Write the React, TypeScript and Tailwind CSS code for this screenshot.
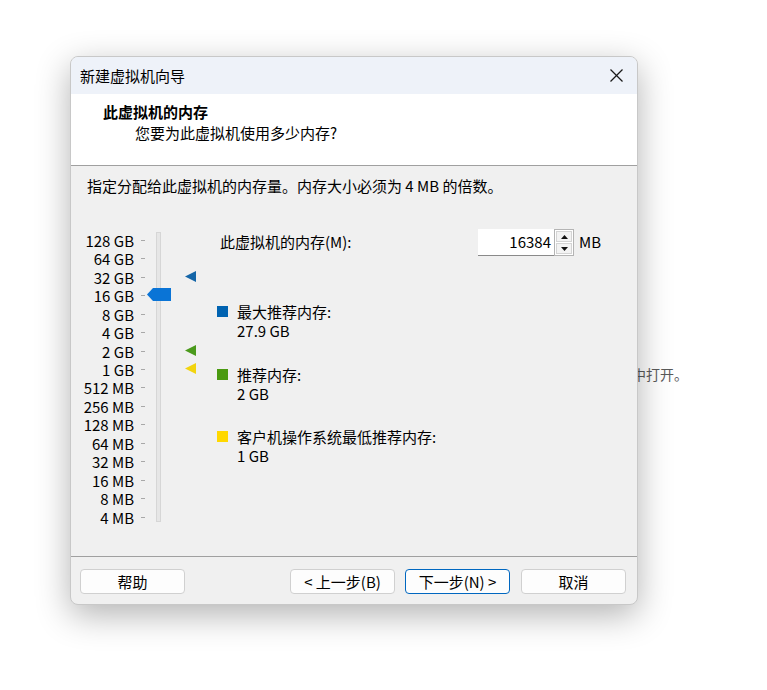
import React from "react";

const labels = [
  "128 GB", "64 GB", "32 GB", "16 GB", "8 GB", "4 GB", "2 GB", "1 GB",
  "512 MB", "256 MB", "128 MB", "64 MB", "32 MB", "16 MB", "8 MB", "4 MB",
];

function Marker({ color }: { color: string }) {
  return (
    <svg width="11" height="11" viewBox="0 0 11 11">
      <polygon points="0,5.5 11,0 11,11" fill={color} />
    </svg>
  );
}

function Legend({ color, title, value }: { color: string; title: string; value: string }) {
  return (
    <div className="flex">
      <div className={`w-[11px] h-[11px] mt-[4px] ${color}`} />
      <div className="ml-[9px] leading-[19px]">
        <div>{title}</div>
        <div>{value}</div>
      </div>
    </div>
  );
}

function Btn({ children, primary }: { children: React.ReactNode; primary?: boolean }) {
  return (
    <div
      className={`h-[25px] w-[105px] rounded-[4px] bg-[#fdfdfd] border flex items-center justify-center text-[15px] leading-none ${
        primary ? "border-[#0067c0]" : "border-[#d0d0d0]"
      }`}
    >
      {children}
    </div>
  );
}

export default function App() {
  return (
    <div className="relative w-[767px] h-[690px] bg-white overflow-hidden font-['Noto_Sans_CJK_SC',sans-serif] text-[15px] text-black">
      <div className="absolute left-[632px] top-[364px] text-[14px] leading-[20px] text-[#5a5a5a]">中打开。</div>

      <div className="absolute left-[70px] top-[56px] w-[568px] h-[549px] rounded-[8px] border border-[#c8c8c8] bg-[#f0f0f0] shadow-[0_10px_34px_rgba(0,0,0,0.30)] overflow-hidden flex flex-col">
        {/* title bar */}
        <div className="h-[37px] bg-[#eef2f9] flex items-center justify-between pl-[9px] pr-[14px] shrink-0">
          <span className="text-[15px] leading-none">新建虚拟机向导</span>
          <svg width="13" height="13" viewBox="0 0 13 13" stroke="#1a1a1a" strokeWidth="1.2">
            <line x1="0.5" y1="0.5" x2="12.5" y2="12.5" />
            <line x1="12.5" y1="0.5" x2="0.5" y2="12.5" />
          </svg>
        </div>
        {/* header */}
        <div className="h-[72px] bg-white border-b border-[#a0a0a0] shrink-0 pl-[32px] pt-[7px]">
          <div className="font-bold leading-[21px]">此虚拟机的内存</div>
          <div className="pl-[32px] leading-[21px]">您要为此虚拟机使用多少内存?</div>
        </div>
        {/* content */}
        <div className="flex-1 flex flex-col">
          <div className="pl-[16px] pt-[10px] leading-[20px]">
            指定分配给此虚拟机的内存量。内存大小必须为 4 MB 的倍数。
          </div>
          <div className="flex mt-[33px] ml-[9px]">
            {/* slider */}
            <div className="relative w-[137px] h-[296px] mt-[2px] flex">
              <div className="w-[54px] flex flex-col">
                {labels.map((l) => (
                  <div key={l} className="h-[18.47px] flex items-center justify-end text-[15px] leading-[15px] whitespace-nowrap">
                    {l}
                  </div>
                ))}
              </div>
              <div className="w-[4px] ml-[7px] flex flex-col">
                {labels.map((l) => (
                  <div key={l} className="h-[18.47px] flex items-center">
                    <div className="w-[4px] h-px bg-[#a8a8a8]" />
                  </div>
                ))}
              </div>
              <div className="ml-[11px] mt-[1px] w-[5px] h-[290px] bg-[#e6e6e6] border border-[#d6d6d6]" />
              <svg className="absolute left-[67px] top-[57px]" width="24" height="13" viewBox="0 0 24 13">
                <polygon points="0,6.5 6,0 24,0 24,13 6,13" fill="#0a74d6" />
              </svg>
              <div className="absolute left-[105px] top-[40px]">
                <Marker color="#1566a8" />
              </div>
              <div className="absolute left-[105px] top-[114px]">
                <Marker color="#4b9a1c" />
              </div>
              <div className="absolute left-[105px] top-[132px]">
                <Marker color="#f2d40f" />
              </div>
            </div>
            {/* right */}
            <div className="flex flex-col">
              <div className="flex items-center h-[27px]">
                <div className="w-[261px] pl-[3px]">此虚拟机的内存(M):</div>
                <div className="w-[76px] h-[27px] bg-white border-b border-[#8a8a8a] flex items-center justify-end pr-[3px]">
                  16384
                </div>
                <div className="w-[20px] h-[27px] border border-[#b4b4b4] bg-white flex flex-col p-px gap-px">
                  <div className="flex-1 bg-[#f3f3f3] border border-[#d4d4d4] flex items-center justify-center">
                    <svg width="7" height="4" viewBox="0 0 7 4"><polygon points="3.5,0 7,4 0,4" fill="#111" /></svg>
                  </div>
                  <div className="flex-1 bg-[#f3f3f3] border border-[#d4d4d4] flex items-center justify-center">
                    <svg width="7" height="4" viewBox="0 0 7 4"><polygon points="0,0 7,0 3.5,4" fill="#111" /></svg>
                  </div>
                </div>
                <div className="ml-[5px]">MB</div>
              </div>
              <div className="mt-[46px]">
                <Legend color="bg-[#0063b1]" title="最大推荐内存:" value="27.9 GB" />
              </div>
              <div className="mt-[25px]">
                <Legend color="bg-[#4a9a10]" title="推荐内存:" value="2 GB" />
              </div>
              <div className="mt-[24px]">
                <Legend color="bg-[#ffd800]" title="客户机操作系统最低推荐内存:" value="1 GB" />
              </div>
            </div>
          </div>
        </div>
        {/* footer */}
        <div className="h-[48px] shrink-0 border-t border-[#a0a0a0] flex items-start pt-[12px] pl-[9px] pr-[11px]">
          <Btn>帮助</Btn>
          <div className="flex-1" />
          <Btn>&lt; 上一步(B)</Btn>
          <div className="w-[10px]" />
          <Btn primary>下一步(N) &gt;</Btn>
          <div className="w-[11px]" />
          <Btn>取消</Btn>
        </div>
      </div>
    </div>
  );
}
